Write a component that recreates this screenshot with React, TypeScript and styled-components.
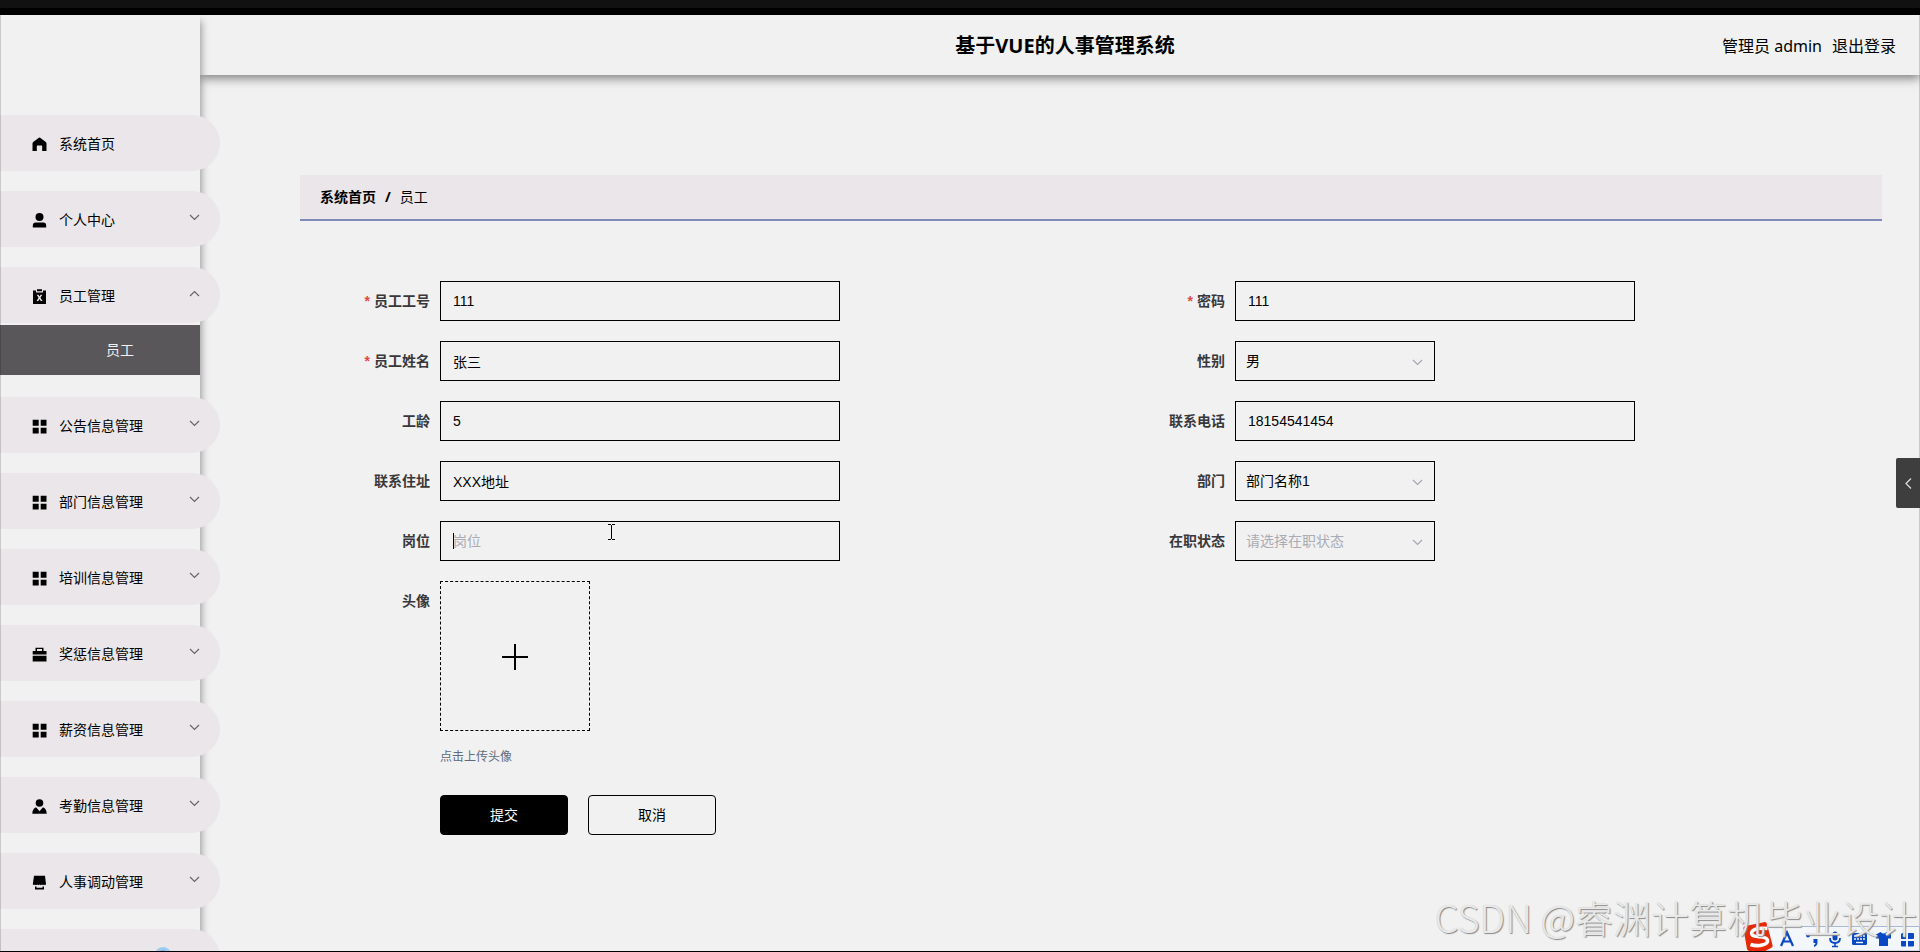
import React from 'react';
import styled, { createGlobalStyle, css } from 'styled-components';

const Global = createGlobalStyle`
  *, *::before, *::after { box-sizing: border-box; }
  body { margin: 0; }
  button, input, select { font: inherit; color: inherit; }
`;

const ui = `"Open Sans", "Noto Sans CJK SC", sans-serif`;
const arial = `"Liberation Sans", "Noto Sans CJK SC", sans-serif`;

const Shell = styled.div`
  position: relative;
  display: flex;
  flex-direction: column;
  height: 100vh;
  overflow: hidden;
  background: #f1f1f1;
  border-bottom: 1px solid #000;
  color: #000;
  font: 14px/20px ${ui};
`;

const Frame = styled.div`
  position: absolute;
  inset: 15px 0 0;
  z-index: 5;
  border: solid rgba(0, 0, 0, 0.16);
  border-width: 0 1px;
  pointer-events: none;
`;

const TopStrip = styled.div`
  position: relative;
  z-index: 4;
  flex: none;
  height: 15px;
  background: #000;
  border-top: 8px solid #111;
`;

const Body = styled.div`
  display: flex;
  flex: 1;
  min-height: 0;
`;

const Sidebar = styled.nav`
  position: relative;
  z-index: 2;
  flex: none;
  width: 200px;
  padding-top: 100px;
  background: #f1f1f1;
  box-shadow: 1px 6px 8px rgba(0, 0, 0, 0.4);
`;

const Menu = styled.ul`
  display: flex;
  flex-direction: column;
  gap: 20px;
  margin: 0;
  padding: 0;
  list-style: none;
`;

const MenuGroup = styled.li<{ $open?: boolean }>`
  flex: none;
  padding-bottom: ${(p) => (p.$open ? 2 : 0)}px;
`;

const MenuButton = styled.button`
  display: flex;
  align-items: center;
  width: 220px;
  height: 56px;
  padding: 2px 20px 0 32px;
  border: 0;
  border-radius: 0 28px 28px 0;
  background: #eae6e9;
  text-align: left;
  cursor: pointer;
`;

const MenuText = styled.span`
  flex: 1;
  margin-left: 12px;
`;

const ChevronBox = styled.span`
  display: flex;
  padding-bottom: 5px;
  color: #666;
`;

const SubItem = styled.a`
  display: flex;
  align-items: center;
  justify-content: center;
  width: 200px;
  height: 50px;
  margin-top: 2px;
  padding-left: 40px;
  background: #59575a;
  color: #f1f1f1;
  text-decoration: none;
`;

const Content = styled.div`
  display: flex;
  flex-direction: column;
  flex: 1;
  min-width: 0;
`;

const Header = styled.header`
  display: grid;
  grid-template-columns: 1fr auto 1fr;
  align-items: center;
  flex: none;
  height: 60px;
  padding: 2px 24px 0 34px;
  box-shadow: 0 3px 10px rgba(0, 0, 0, 0.5);
`;

const Title = styled.h1`
  grid-column: 2;
  margin: 0;
  font-size: 20px;
  line-height: 28px;
  font-weight: 700;
`;

const Account = styled.div`
  display: flex;
  justify-content: flex-end;
  gap: 10px;
  font-family: "Noto Sans", "Noto Sans CJK SC", sans-serif;
  font-size: 16px;
  line-height: 24px;
`;

const Logout = styled.a`
  color: inherit;
  text-decoration: none;
`;

const Main = styled.main`
  flex: 1;
  padding: 100px 30px 0 100px;
`;

const Crumbs = styled.nav`
  display: flex;
  align-items: center;
  gap: 9px;
  height: 46px;
  margin-right: 8px;
  padding: 0 20px;
  background: #eae6e9;
  border-bottom: 2px solid #7f8ab8;
`;

const CrumbHome = styled.a`
  color: inherit;
  font-weight: 700;
  text-decoration: none;
`;

const CrumbSlash = styled.span`
  font-weight: 700;
`;

const Form = styled.form`
  display: grid;
  grid-template-columns: 1fr 1fr;
  row-gap: 20px;
  margin-top: 60px;
`;

const Field = styled.div<{ $wide?: boolean }>`
  display: grid;
  grid-template-columns: 140px minmax(0, 400px);
  grid-column: ${(p) => (p.$wide ? '1 / -1' : 'auto')};
`;

const Label = styled.label<{ $required?: boolean }>`
  padding-right: 10px;
  color: #38383c;
  font-weight: 600;
  line-height: 40px;
  text-align: right;
  ${(p) => p.$required && css`
    &::before {
      content: '*';
      margin-right: 4px;
      color: #e04848;
      font-family: ${arial};
    }
  `}
`;

const Control = styled.div`
  position: relative;
`;

const boxed = css`
  display: block;
  height: 40px;
  border: 1px solid #000;
  border-radius: 0;
  background: transparent;
  color: #000;
  font: 14px/20px ${arial};
  outline: 0;
`;

const Input = styled.input`
  ${boxed}
  width: 100%;
  padding: 0 12px;
  &::placeholder { color: #a9acb4; opacity: 1; }
`;

const SelectWrap = styled.div`
  position: relative;
  width: 200px;
`;

const Select = styled.select<{ $empty?: boolean }>`
  ${boxed}
  width: 100%;
  padding: 0 30px 0 10px;
  appearance: none;
  color: ${(p) => (p.$empty ? '#a9acb4' : '#000')};
`;

const SelectArrow = styled.span`
  position: absolute;
  top: 50%;
  right: 12px;
  display: flex;
  margin-top: -2px;
  color: #a4a7b0;
  pointer-events: none;
`;

const Caret = styled.span`
  position: absolute;
  top: 12px;
  left: 13px;
  width: 1px;
  height: 16px;
  background: #000;
`;

const Pointer = styled.svg`
  position: absolute;
  top: 3px;
  left: 168px;
`;

const Upload = styled.button`
  display: flex;
  align-items: center;
  justify-content: center;
  width: 150px;
  height: 150px;
  padding: 2px 0 0;
  border: 1px dashed #000;
  background: transparent;
  cursor: pointer;
`;

const Hint = styled.p`
  margin: 16px 0 0;
  color: #606b7c;
  font-size: 12px;
  line-height: 20px;
`;

const Actions = styled.div`
  display: flex;
  gap: 20px;
  grid-column: 1 / -1;
  margin-top: 8px;
  padding-left: 140px;
`;

const Button = styled.button<{ $primary?: boolean }>`
  width: 128px;
  height: 40px;
  border: 1px solid #000;
  border-radius: 4px;
  background: ${(p) => (p.$primary ? '#000' : 'transparent')};
  color: ${(p) => (p.$primary ? '#fff' : '#000')};
  cursor: pointer;
`;

const Drawer = styled.button`
  position: absolute;
  top: 458px;
  right: 0;
  z-index: 6;
  display: flex;
  align-items: center;
  justify-content: center;
  width: 24px;
  height: 50px;
  padding: 0;
  border: 0;
  border-radius: 2px 0 0 2px;
  background: #3e3e3e;
  color: #ddd;
`;

const Ripple = styled.span`
  position: absolute;
  bottom: -12px;
  left: 155px;
  z-index: 3;
  width: 16px;
  height: 16px;
  border-radius: 50%;
  background: radial-gradient(#2f8fe0 30%, #9ccbf0 45%);
`;

const Watermark = styled.div`
  position: absolute;
  right: 3px;
  bottom: 6px;
  z-index: 8;
  color: #e9e9e9;
  font: 300 38px/56px "Noto Sans CJK SC", sans-serif;
  text-shadow: 1px 1px 1px #888, 0 0 1px #ccc;
  white-space: nowrap;
  pointer-events: none;
`;

const InputBar = styled.svg`
  position: absolute;
  right: 0;
  bottom: 0;
  z-index: 7;
`;

type IconName = 'home' | 'user' | 'clip' | 'grid' | 'case' | 'person' | 'cup';

const shapes: Record<IconName, React.ReactNode> = {
  home: <path d="M7.500.5Q7 .5 6.500.9L1.200 5Q.5 5.600.5 6.500V14h4.300V9.500q0-1 1-1h3.400q1 0 1 1V14h4.300V6.500q0-.9-.7-1.500L8.500.9Q8 .5 7.500.5Z" />,
  user: <><circle cx="7.500" cy="4" r="4" /><path d="M.8 14.500v-2q0-3 3-3h7.400q3 0 3 3v2Z" /></>,
  clip: <path fillRule="evenodd" d="M1 1.500h3v2h7v-2h3V15H1ZM5 .3h5v2H5ZM4.700 5.700 6.600 8.800 4.500 12h1.800l1.200-2 1.300 2h1.800L8.400 8.800l1.900-3.100H8.600l-1.100 1.900-1.100-1.900Z" />,
  grid: <path d="M.7.700h6v6h-6ZM8.700.7h5.800v6H8.700ZM.7 8.700h6v5.800h-6ZM8.700 8.700h5.800v5.800H8.700Z" />,
  case: <path fillRule="evenodd" d="M3.500 4V.8h8V4h3v3.500H.7V4ZM5 4h5V2H5ZM.7 8.700h13.800v5.800H.7Z" />,
  person: <><circle cx="7.500" cy="4" r="3.800" /><path d="M.3 14.700q0-5 3.700-6.500l3.500 4L11 8.200q3.700 1.500 3.700 6.500Z" /></>,
  cup: <path d="M2 .7h11l1 8.500-1 1-1-.8-1 .8-1-.8-1.200.8-1.200-.8-1.200.8-1.200-.8-1.200.8-1-.8-1 .8-1.200-1ZM3 11.500h1.500v1.300h6v-1.300H12v3H3Z" />,
};

const Icon = ({ name }: { name: IconName }) => (
  <svg width="15" height="15" viewBox="0 0 15 15" fill="#000" aria-hidden="true">{shapes[name]}</svg>
);

const Chevron = ({ up }: { up?: boolean }) => (
  <svg width="11" height="7" viewBox="0 0 11 7" fill="none" stroke="currentColor" strokeWidth="1.2" aria-hidden="true">
    <path d={up ? 'M1 6 5.500 1.500 10 6' : 'M1 1 5.500 5.500 10 1'} />
  </svg>
);

const menu: { icon: IconName; text: string; leaf?: boolean; child?: string }[] = [
  { icon: 'home', text: '系统首页', leaf: true },
  { icon: 'user', text: '个人中心' },
  { icon: 'clip', text: '员工管理', child: '员工' },
  { icon: 'grid', text: '公告信息管理' },
  { icon: 'grid', text: '部门信息管理' },
  { icon: 'grid', text: '培训信息管理' },
  { icon: 'case', text: '奖惩信息管理' },
  { icon: 'grid', text: '薪资信息管理' },
  { icon: 'person', text: '考勤信息管理' },
  { icon: 'cup', text: '人事调动管理' },
];

interface FieldSpec {
  id: string;
  label: string;
  value?: string;
  required?: boolean;
  placeholder?: string;
  select?: boolean;
  active?: boolean;
}

const fields: FieldSpec[] = [
  { id: 'number', label: '员工工号', value: '111', required: true },
  { id: 'password', label: '密码', value: '111', required: true },
  { id: 'name', label: '员工姓名', value: '张三', required: true },
  { id: 'gender', label: '性别', value: '男', select: true },
  { id: 'years', label: '工龄', value: '5' },
  { id: 'phone', label: '联系电话', value: '18154541454' },
  { id: 'address', label: '联系住址', value: 'XXX地址' },
  { id: 'department', label: '部门', value: '部门名称1', select: true },
  { id: 'post', label: '岗位', placeholder: '岗位', active: true },
  { id: 'status', label: '在职状态', placeholder: '请选择在职状态', select: true },
];

const FormField = ({ spec }: { spec: FieldSpec }) => (
  <Field>
    <Label htmlFor={spec.id} $required={spec.required}>{spec.label}</Label>
    <Control>
      {spec.select ? (
        <SelectWrap>
          <Select id={spec.id} $empty={!spec.value}>
            <option>{spec.value || spec.placeholder}</option>
          </Select>
          <SelectArrow><Chevron /></SelectArrow>
        </SelectWrap>
      ) : (
        <Input id={spec.id} defaultValue={spec.value} placeholder={spec.placeholder} />
      )}
      {spec.active && (
        <>
          <Caret />
          <Pointer width="7" height="16" viewBox="0 0 7 16" stroke="#000" fill="none" aria-hidden="true">
            <path d="M0 .5h3M4 .5h3M3.500 1v14M0 15.500h3M4 15.500h3" />
          </Pointer>
        </>
      )}
    </Control>
  </Field>
);

export default function App() {
  return (
    <Shell>
      <Global />
      <TopStrip />
      <Body>
        <Sidebar>
          <Menu>
            {menu.map((item) => (
              <MenuGroup key={item.text} $open={!!item.child}>
                <MenuButton type="button">
                  <Icon name={item.icon} />
                  <MenuText>{item.text}</MenuText>
                  {!item.leaf && <ChevronBox><Chevron up={!!item.child} /></ChevronBox>}
                </MenuButton>
                {item.child && <SubItem href="#staff">{item.child}</SubItem>}
              </MenuGroup>
            ))}
            <MenuGroup><MenuButton type="button" aria-label="更多" /></MenuGroup>
          </Menu>
        </Sidebar>
        <Content>
          <Header>
            <Title>基于VUE的人事管理系统</Title>
            <Account>
              <span>管理员 admin</span>
              <Logout href="#logout">退出登录</Logout>
            </Account>
          </Header>
          <Main>
            <Crumbs>
              <CrumbHome href="#home">系统首页</CrumbHome>
              <CrumbSlash>/</CrumbSlash>
              <span>员工</span>
            </Crumbs>
            <Form onSubmit={(e) => e.preventDefault()}>
              {fields.map((f) => <FormField key={f.id} spec={f} />)}
              <Field $wide>
                <Label htmlFor="avatar">头像</Label>
                <Control>
                  <Upload id="avatar" type="button">
                    <svg width="26" height="26" viewBox="0 0 26 26" stroke="#000" strokeWidth="2" aria-hidden="true">
                      <path d="M13 0v26M0 13h26" />
                    </svg>
                  </Upload>
                  <Hint>点击上传头像</Hint>
                </Control>
              </Field>
              <Actions>
                <Button type="submit" $primary>提交</Button>
                <Button type="button">取消</Button>
              </Actions>
            </Form>
          </Main>
        </Content>
      </Body>
      <Frame />
      <Ripple />
      <Drawer type="button" aria-label="展开">
        <svg width="7" height="11" viewBox="0 0 7 11" fill="none" stroke="currentColor" strokeWidth="1.2" aria-hidden="true">
          <path d="M6 .5 1 5.500l5 5" />
        </svg>
      </Drawer>
      <InputBar width="177" height="30" viewBox="0 0 177 30" aria-hidden="true">
        <path d="M20 5.500h156.500V30H20Z" fill="#f3f6fa" stroke="#a9b8d6" />
        <path d="M.5 8q-.5-2.500 2-3L21 1.200q2.500-.5 3 2L29.500 24q.5 2.500-2 3.300L22 30H6.500q-2 0-2.500-2Z" fill="#e42a06" />
        <path d="M24.500 7.500C14 6.500 7 9 9 13.500c1.500 3.500 14.500 1 15.500 5.500C25.500 24 15 26 7.500 23.500" fill="none" stroke="#fff" strokeWidth="3.600" />
        <g fill="none" stroke="#0a48c4" strokeWidth="2.200">
          <path d="m38 25 6-13.500L50 25M40.500 20.500h7" />
          <path d="M87 17c0 3.500 2 5 5 5s5-1.500 5-5" strokeWidth="1.800" />
          <path d="M92 22v3.500M89 25.500h6" strokeWidth="1.600" />
        </g>
        <g fill="#0a48c4">
          <circle cx="65" cy="14.500" r="2" />
          <path d="M70.500 18h4v3.500q0 3-3.500 4.500v-2q1.500-.7 1.500-2h-2Z" />
          <rect x="89.500" y="10.500" width="5" height="9" rx="2.500" />
          <rect x="109" y="12" width="15" height="12" rx="1.500" />
          <path d="m133 13.500 4.500-2.500q3 3 6 0l4.500 2.500v4h-3V25h-9v-7.500h-3Z" />
          <path d="M159 12h4v6h-5v-5ZM165 12h5q1 0 1 1v4q0 1-1 1h-5ZM158 20h5v5.500h-4q-1 0-1-1ZM165 20h6v4.500q0 1-1 1h-5Z" />
        </g>
        <path d="M111 15h11M111 18h11" stroke="#f3f6fa" strokeWidth="1.600" strokeDasharray="2 1" />
        <path d="M113 21.500h7" stroke="#f3f6fa" strokeWidth="1.400" />
      </InputBar>
      <Watermark>CSDN @睿渊计算机毕业设计</Watermark>
    </Shell>
  );
}
